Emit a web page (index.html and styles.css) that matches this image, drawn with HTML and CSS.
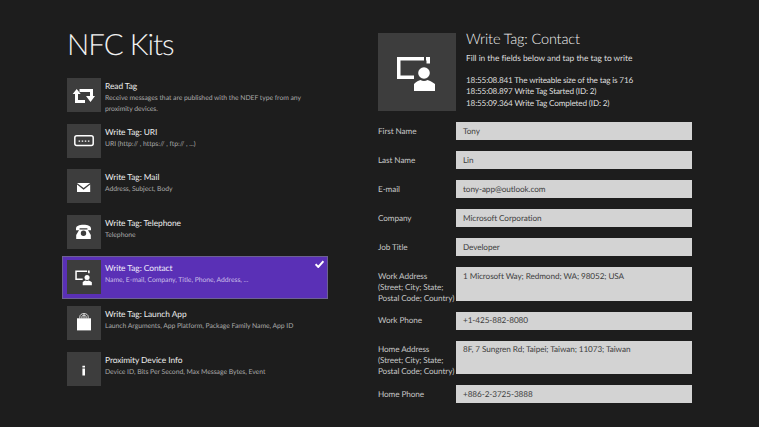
FILE: index.html
```html
<!DOCTYPE html>
<html lang="en">
<head>
<meta charset="utf-8">
<title>NFC Kits</title>
<link rel="stylesheet" href="styles.css">
</head>
<body>
<div class="page">
  <section class="left">
    <h1 class="app-title">NFC Kits</h1>
    <ul class="list">
      <li class="item">
        <div class="tile"><svg class="icon" viewBox="0 0 34 34"><path d="M9.7 11 5.7 16H8V25H18V22H11V16H13.7Z M12.5 11H26V18H28L23.5 24 19 18H23V14H12.5Z" fill="#fff"/></svg></div>
        <div class="info"><div class="name">Read Tag</div><div class="desc">Receive messages that are published with the NDEF type from any proximity devices.</div></div>
      </li>
      <li class="item">
        <div class="tile"><svg class="icon" viewBox="0 0 34 34"><rect x="7.8" y="11.8" width="18.4" height="9.6" rx="2" fill="none" stroke="#fff" stroke-width="1.5"/><path d="M11.6 16.6h1.5v1.2h-1.5z M14.7 16.6h1.5v1.2h-1.5z M17.8 16.6h1.5v1.2h-1.5z M20.9 16.6h1.5v1.2h-1.5z" fill="#fff"/></svg></div>
        <div class="info"><div class="name">Write Tag: URI</div><div class="desc">URI (http:// , https:// , ftp:// , ...)</div></div>
      </li>
      <li class="item">
        <div class="tile"><svg class="icon" viewBox="0 0 34 34"><path d="M10 14H23.2L16.6 19Z M10 15.6 16.6 20.8 23.2 15.6V23H10Z" fill="#fff"/></svg></div>
        <div class="info"><div class="name">Write Tag: Mail</div><div class="desc">Address, Subject, Body</div></div>
      </li>
      <li class="item">
        <div class="tile"><svg class="icon" viewBox="0 0 34 34"><path d="M9 13.6C9 11 12.2 9.8 16.5 9.8S24 11 24 13.6V15.2H20.4V13.2H12.6V15.2H9Z" fill="#fff"/><path fill-rule="evenodd" d="M12.4 14.4H20.6L23.8 20V24H9.2V20ZM16.5 15.6A2.7 2.7 0 1 0 16.5 21 2.7 2.7 0 1 0 16.5 15.6Z" fill="#fff"/></svg></div>
        <div class="info"><div class="name">Write Tag: Telephone</div><div class="desc">Telephone</div></div>
      </li>
      <li class="item selected">
        <div class="tile"><svg class="icon" viewBox="0 0 78 78"><use href="#contact"/></svg></div>
        <div class="info"><div class="name">Write Tag: Contact</div><div class="desc">Name, E-mail, Company, Title, Phone, Address, ...</div></div>
        <svg class="check" viewBox="0 0 9 8"><path d="M.6 4.2 3.3 7 8.4 1.2" fill="none" stroke="#fff" stroke-width="1.9"/></svg>
      </li>
      <li class="item">
        <div class="tile"><svg class="icon" viewBox="0 0 34 34"><path d="M10 12.3H24V24.4H10Z" fill="#fff"/><path d="M12.8 12.5V10.8C12.8 8.7 14.8 7.5 17 7.5S21.2 8.7 21.2 10.8V12.5M14.9 12.5V10.6C14.9 9.8 15.8 9.3 17 9.3S19.1 9.8 19.1 10.6V12.5M17 8V12.5" fill="none" stroke="#fff" stroke-width=".8"/></svg></div>
        <div class="info"><div class="name">Write Tag: Launch App</div><div class="desc">Launch Arguments, App Platform, Package Family Name, App ID</div></div>
      </li>
      <li class="item">
        <div class="tile"><svg class="icon" viewBox="0 0 34 34"><path d="M15.4 13.8H18V15.6H15.4Z M15.4 16.6H18V23.5H15.4Z" fill="#fff"/></svg></div>
        <div class="info"><div class="name">Proximity Device Info</div><div class="desc">Device ID, Bits Per Second, Max Message Bytes, Event</div></div>
      </li>
    </ul>
  </section>
  <section class="right">
    <header class="head">
      <div class="tile tile-large"><svg class="icon-large" viewBox="0 0 78 78"><g id="contact"><path d="M19 24H46V27.5H22.5V42.5H36V46H19Z" fill="#fff"/><path d="M48 24H52V30.5H48.5V27.5H48Z" fill="#fff"/><circle cx="46" cy="40" r="5.8" fill="#fff"/><path d="M36 58V51C38 48.5 41 47.5 42.5 47C44.5 48.2 47.5 48.2 49.5 47C51 47.5 54 48.5 57 51V58Z" fill="#fff"/></g></svg></div>
      <div class="head-text">
        <h2 class="page-title">Write Tag: Contact</h2>
        <p class="hint">Fill in the fields below and tap the tag to write</p>
        <p class="log">18:55:08.841 The writeable size of the tag is 716<br>18:55:08.897 Write Tag Started (ID: 2)<br>18:55:09.364 Write Tag Completed (ID: 2)</p>
      </div>
    </header>
    <div class="form">
      <div class="label">First Name</div><div class="field">Tony</div>
      <div class="label">Last Name</div><div class="field">Lin</div>
      <div class="label">E-mail</div><div class="field">tony-app@outlook.com</div>
      <div class="label">Company</div><div class="field">Microsoft Corporation</div>
      <div class="label">Job Title</div><div class="field">Developer</div>
      <div class="label">Work Address<br>(Street; City; State;<br>Postal Code; Country)</div><div class="field multi">1 Microsoft Way; Redmond; WA; 98052; USA</div>
      <div class="label">Work Phone</div><div class="field">+1-425-882-8080</div>
      <div class="label">Home Address<br>(Street; City; State;<br>Postal Code; Country)</div><div class="field multi">8F, 7 Sungren Rd; Taipei; Taiwan; 11073; Taiwan</div>
      <div class="label">Home Phone</div><div class="field">+886-2-3725-3888</div>
    </div>
  </section>
</div>
</body>
</html>
```

FILE: styles.css
```css
* { box-sizing: border-box; }
html, body { margin: 0; height: 100%; }
body {
  background: #1d1d1d;
  color: #e6e6e6;
  font-family: Lato, "Open Sans", sans-serif;
  text-rendering: geometricPrecision;
  overflow: hidden;
}
.page { display: flex; gap: 50px; padding-left: 62px; width: 759px; height: 427px; }
.left { width: 266px; flex: none; }
.right { width: 314px; flex: none; padding-top: 33px; }

.app-title {
  margin: 0 0 0 5px;
  height: 73.7px;
  padding-top: 24px;
  font-size: 29.5px;
  line-height: 42px;
  font-weight: 300;
  letter-spacing: -1px;
  color: #f2f2f2;
}
.list { list-style: none; margin: 0; padding: 0; display: flex; flex-direction: column; gap: 3px; }
.item {
  position: relative;
  display: flex;
  gap: 4px;
  height: 42.6px;
  padding: 3.3px 4px;
  border: 1px solid transparent;
}
.item.selected { background: #5a30b6; border-color: #6d6192; }
.tile { flex: none; width: 34px; height: 34px; background: #3d3d3d; }
.icon { display: block; width: 34px; height: 34px; }
.info { padding-top: 2px; min-width: 0; }
.name { font-size: 8.4px; line-height: 13px; letter-spacing: -.06px; color: #ececec; }
.desc { font-size: 6.8px; line-height: 11.4px; letter-spacing: -.03px; color: #aaaaaa; }
.selected .desc { color: #c9bde8; }
.selected .name { color: #f0ecfa; }
.check { position: absolute; right: 3px; top: 3px; width: 9px; height: 8px; }

.head { display: flex; gap: 10px; height: 78px; }
.tile-large { width: 78px; height: 78px; }
.icon-large { display: block; width: 78px; height: 78px; }
.head-text { min-width: 0; }
.page-title { margin: 0; font-size: 14.5px; line-height: 13px; font-weight: 300; letter-spacing: -.15px; color: #f0f0f0; }
.hint { margin: 6px 0 0; font-size: 8.4px; line-height: 12px; letter-spacing: -.04px; color: #dedede; }
.log { margin: 11px 0 0; font-size: 8.2px; line-height: 11.4px; letter-spacing: -.18px; color: #dedede; }

.form {
  display: grid;
  grid-template-columns: 78px 236px;
  row-gap: 11px;
  margin-top: 11px;
}
.label { height: 18px; font-size: 8.2px; line-height: 11px; padding-top: 3.6px; letter-spacing: -.1px; color: #c6c6c6; white-space: nowrap; }
.field {
  height: 18px;
  background: #d3d3d3;
  color: #404040;
  font-size: 8.2px;
  line-height: 11px;
  letter-spacing: -.08px;
  padding: 3.5px 7px 0;
}
.field.multi { height: 33.5px; }
```
